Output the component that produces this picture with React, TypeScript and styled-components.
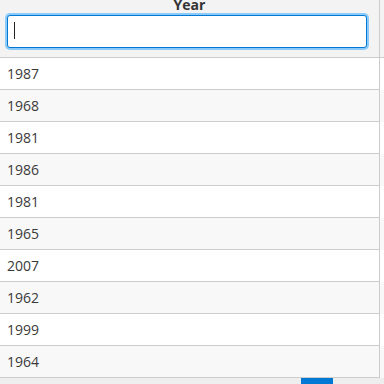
import React from "react";
import styled, { createGlobalStyle } from "styled-components";

const GlobalStyle = createGlobalStyle`
  html, body {
    margin: 0;
    padding: 0;
    background: #ffffff;
    overflow: hidden;
  }
  body {
    font-family: "Open Sans", "DejaVu Sans", sans-serif;
    color: #333;
  }
`;

const Grid = styled.div`
  width: 384px;
  height: 384px;
  display: flex;
  flex-direction: column;
  overflow: hidden;
`;

const HeaderRow = styled.div`
  display: flex;
  background: #f3f3f3;
  border-bottom: 1px solid #cccccc;
`;

const HeaderCell = styled.div`
  width: 379px;
  border-right: 1px solid #cccccc;
  display: flex;
  flex-direction: column;
  align-items: stretch;
  padding-bottom: 9px;
`;

const Title = styled.div`
  margin-top: -3px;
  height: 16px;
  line-height: 16px;
  font-size: 14px;
  font-weight: 700;
  text-align: center;
  color: #333;
`;

const InputWrap = styled.div`
  position: relative;
  display: flex;
  margin: 2px 12px 0 7px;
`;

const FilterInput = styled.input`
  box-sizing: border-box;
  flex: 1;
  height: 33px;
  border: 1px solid #0078d4;
  border-radius: 3px;
  box-shadow: 0 0 0 2px #8ccbf9;
  outline: none;
  padding: 0 6px;
  font-family: "Open Sans", sans-serif;
  font-size: 14px;
  color: #333;
  caret-color: transparent;
  background: #fff;
`;

const Caret = styled.span`
  position: absolute;
  left: 7px;
  top: 7px;
  width: 1px;
  height: 17px;
  background: #222;
  pointer-events: none;
`;

const Row = styled.div<{ $alt: boolean }>`
  display: flex;
  background: ${(p) => (p.$alt ? "#f8f8f8" : "#ffffff")};
`;

const Cell = styled.div`
  box-sizing: border-box;
  width: 380px;
  height: 32px;
  border-right: 1px solid #cccccc;
  border-bottom: 1px solid #cccccc;
  padding-left: 7px;
  display: flex;
  align-items: center;
  font-size: 14px;
  color: #3a3a3a;
`;

const Footer = styled.div`
  flex: 1;
  background: #eeeeee;
  display: flex;
`;

const PagerThumb = styled.div`
  margin-left: 301px;
  width: 32px;
  background: #0078d4;
`;

const years = [1987, 1968, 1981, 1986, 1981, 1965, 2007, 1962, 1999, 1964];

export default function App() {
  return (
    <>
      <GlobalStyle />
      <Grid>
        <HeaderRow>
          <HeaderCell>
            <Title>Year</Title>
            <InputWrap>
              <FilterInput autoFocus />
              <Caret />
            </InputWrap>
          </HeaderCell>
        </HeaderRow>
        {years.map((y, i) => (
          <Row key={i} $alt={i % 2 === 1}>
            <Cell>{y}</Cell>
          </Row>
        ))}
        <Footer>
          <PagerThumb />
        </Footer>
      </Grid>
    </>
  );
}
